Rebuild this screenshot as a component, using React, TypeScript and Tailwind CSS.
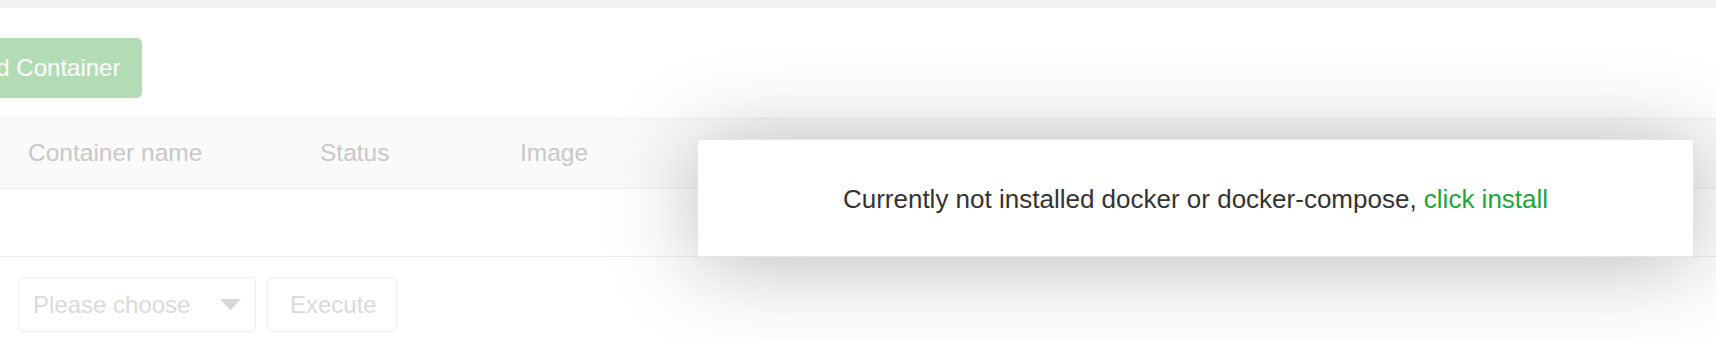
import React from "react";

export default function App() {
  return (
    <div
      className="relative w-[1716px] h-[338px] overflow-hidden bg-white"
      style={{ fontFamily: '"Liberation Sans", Arial, sans-serif' }}
    >
      <div className="h-[8px] bg-[#f2f2f2]" />
      <div className="h-[110px] pt-[30px]">
        <button className="-ml-[55px] h-[60px] px-[22px] rounded-[5px] bg-[#b2dcb4] text-white text-[24px] leading-none">
          Add Container
        </button>
      </div>
      <div className="border-t border-[#eeeeee]">
        <div className="flex h-[70px] items-center bg-[#fafafa] border-b border-[#eeeeee] text-[24.5px] text-[#c8c8c8]">
          <div className="w-[292px] pl-[28px]">Container name</div>
          <div className="w-[200px] pl-[28px]">Status</div>
          <div className="pl-[28px]">Image</div>
        </div>
        <div className="h-[68px] border-b border-[#eeeeee]" />
      </div>
      <div className="flex gap-[11px] pt-[20px] pl-[18px]">
        <div className="flex items-center justify-between w-[238px] h-[55px] pl-[14px] pr-[14px] border border-[#efefef] rounded-[4px]">
          <span className="text-[24px] text-[#dadada]">Please choose</span>
          <svg width="21" height="12" viewBox="0 0 21 12">
            <path d="M0 0 H21 L10.5 11.5 Z" fill="#d8d8d8" />
          </svg>
        </div>
        <div className="flex items-center w-[130px] h-[55px] pl-[22px] border border-[#efefef] rounded-[4px]">
          <span className="text-[24px] text-[#dadada]">Execute</span>
        </div>
      </div>
      <div className="absolute left-[697px] top-[139px] w-[997px] h-[118px] flex items-center justify-center bg-white border border-[#e6e6e6] rounded-[3px] shadow-[0_6px_90px_rgba(0,0,0,0.28)]">
        <span className="text-[26px] text-[#333333] pt-[3px]">
          Currently not installed docker or docker-compose,{" "}
          <span className="text-[#20a53a]">click install</span>
        </span>
      </div>
    </div>
  );
}
